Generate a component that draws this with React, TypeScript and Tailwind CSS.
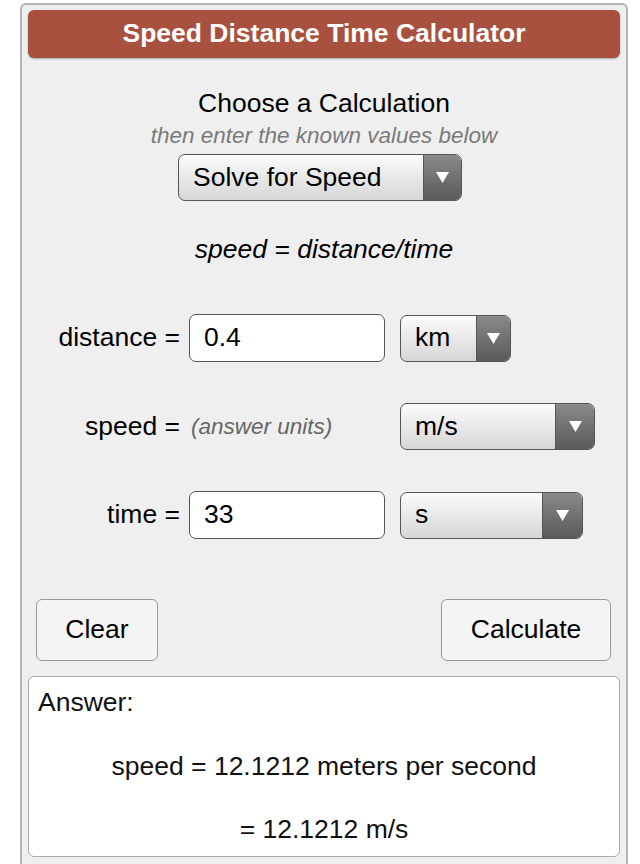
import React from 'react';

const font = { fontFamily: '"Liberation Sans", Arial, sans-serif' };

const Arrow = () => (
  <svg width="15" height="13" viewBox="0 0 15 13">
    <path d="M1 1 L14 1 L7.5 12 Z" fill="#fff" />
  </svg>
);

const Select = ({ label, width, arrow = 38 }: { label: string; width: string; arrow?: number }) => (
  <div
    className={`flex h-[47px] ${width} overflow-hidden rounded-[7px] border-[1.5px] border-[#555] bg-gradient-to-b from-[#fbfbfb] to-[#d6d6d6]`}
  >
    <div className="flex flex-1 items-center pl-[14px] text-[26.5px] text-black">{label}</div>
    <div
      className="flex items-center justify-center border-l border-[#555] bg-gradient-to-b from-[#8a8a8a] to-[#5a5a5a]"
      style={{ width: arrow }}
    >
      <Arrow />
    </div>
  </div>
);

const Input = ({ value }: { value: string }) => (
  <div className="flex h-[48px] w-[196px] items-center rounded-[7px] border-[1.5px] border-[#555] bg-white pl-[14px] text-[26.5px] text-black">
    {value}
  </div>
);

export default function App() {
  return (
    <div className="min-h-[864px] bg-white pl-[20px] pr-[12px] pt-[3px]" style={font}>
      <div className="h-[870px] rounded-t-[6px] border-x-2 border-t-2 border-[#b4b4b4] bg-[#efefef] px-[6px] pt-[5px]">
        <div className="flex h-[48px] items-center justify-center rounded-[6px] bg-[#a9513f] text-[26.5px] font-bold text-white shadow-[0_1px_2px_rgba(0,0,0,0.3)]">
          Speed Distance Time Calculator
        </div>

        <div className="mt-[30px] text-center text-[26.5px] leading-[30px] text-black">Choose a Calculation</div>
        <div className="mt-[5px] text-center text-[22.5px] italic leading-[26px] text-[#7a7a7a]">
          then enter the known values below
        </div>
        <div className="mt-[5px] flex justify-center pr-[8px]">
          <Select label="Solve for Speed" width="w-[284px]" arrow={38} />
        </div>
        <div className="mt-[33px] text-center text-[26.5px] italic leading-[30px] text-black">speed = distance/time</div>

        <div className="mt-[50px] grid grid-cols-[152px_1fr] items-center gap-x-[9px] gap-y-[41px] text-[26.5px] text-black">
          <div className="text-right">distance =</div>
          <div className="flex items-center gap-[15px]">
            <Input value="0.4" />
            <Select label="km" width="w-[111px]" arrow={34} />
          </div>

          <div className="text-right">speed =</div>
          <div className="flex items-center">
            <div className="w-[211px] pl-[2px] text-[22.5px] italic text-[#666]">(answer units)</div>
            <Select label="m/s" width="w-[195px]" arrow={39} />
          </div>

          <div className="text-right">time =</div>
          <div className="flex items-center gap-[15px]">
            <Input value="33" />
            <Select label="s" width="w-[183px]" arrow={40} />
          </div>
        </div>

        <div className="mt-[60px] flex justify-between pl-[8px] pr-[9px]">
          <div className="flex h-[62px] w-[122px] items-center justify-center rounded-[6px] border-[1.5px] border-[#999] bg-[#f4f4f4] text-[26.5px] text-black">
            Clear
          </div>
          <div className="flex h-[62px] w-[170px] items-center justify-center rounded-[6px] border-[1.5px] border-[#999] bg-[#f4f4f4] text-[26.5px] text-black">
            Calculate
          </div>
        </div>

        <div className="mt-[15px] h-[181px] rounded-[6px] border-[1.5px] border-[#aaa] bg-white px-[9px] pt-[10px] text-[26.5px] text-[#111]">
          <div className="leading-[30px]">Answer:</div>
          <div className="mt-[34px] text-center leading-[30px]">speed = 12.1212 meters per second</div>
          <div className="mt-[33px] text-center leading-[30px]">= 12.1212 m/s</div>
        </div>
      </div>
    </div>
  );
}
